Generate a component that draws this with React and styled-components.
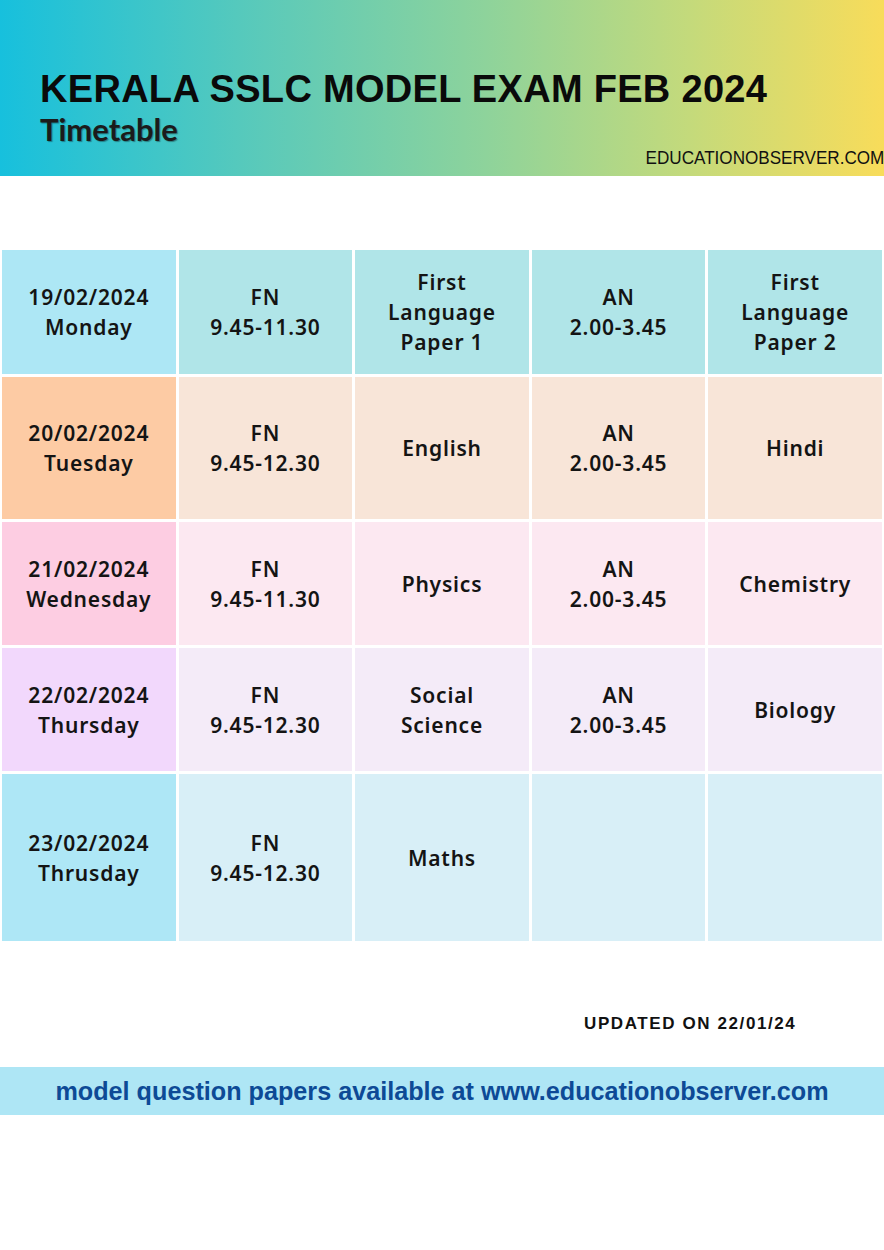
import React from "react";
import styled, { createGlobalStyle } from "styled-components";

const Global = createGlobalStyle`
  html, body { margin: 0; padding: 0; background: #ffffff; }
  body { font-family: "Noto Sans", "Liberation Sans", sans-serif; }
`;

const Page = styled.div`
  width: 884px;
  min-height: 1250px;
  background: #fff;
  display: flex;
  flex-direction: column;
`;

const Header = styled.header`
  height: 176px;
  box-sizing: border-box;
  background: linear-gradient(90deg, #17c0dd 0%, #5ccab9 30%, #8ed39b 55%, #c4da7b 78%, #f8dc5a 100%);
  padding: 68px 0 0 40px;
  display: flex;
  flex-direction: column;
`;

const Title = styled.h1`
  margin: 0;
  font-family: "Liberation Sans", Arial, sans-serif;
  font-weight: 700;
  font-size: 38px;
  line-height: 42px;
  letter-spacing: 0.3px;
  color: #0a0a0a;
`;

const Subtitle = styled.div`
  margin-top: 3px;
  font-family: "Lato", sans-serif;
  font-weight: 700;
  font-size: 31px;
  line-height: 33px;
  color: #1b1b1b;
  text-shadow: 1px 1px 1px rgba(0, 0, 0, 0.35);
`;

const Site = styled.div`
  align-self: flex-end;
  margin-top: 1px;
  font-family: "Liberation Sans", sans-serif;
  font-size: 18px;
  line-height: 22px;
  color: #111;
  transform: scaleX(0.95);
  transform-origin: right center;
`;

const Table = styled.div`
  margin: 74px 0 0 2px;
  width: 880px;
  display: grid;
  grid-template-columns: repeat(5, 1fr);
  column-gap: 3px;
  row-gap: 3px;
`;

const Cell = styled.div`
  background: ${(p) => p.$bg};
  height: ${(p) => p.$h}px;
  display: flex;
  align-items: center;
  justify-content: center;
  text-align: center;
  font-family: "Noto Sans", sans-serif;
  font-weight: 600;
  font-size: 21px;
  line-height: 30px;
  letter-spacing: 0.8px;
  color: #141414;
  white-space: pre-line;
  box-sizing: border-box;
`;

const Updated = styled.div`
  margin: 73px 0 0 584px;
  font-family: "Liberation Sans", sans-serif;
  font-weight: 700;
  font-size: 17px;
  line-height: 20px;
  letter-spacing: 1.6px;
  color: #111;
`;

const Banner = styled.div`
  margin-top: 33px;
  height: 48px;
  background: #aee6f5;
  display: flex;
  align-items: center;
  justify-content: center;
  font-family: "Liberation Sans", Arial, sans-serif;
  font-weight: 700;
  font-size: 25.2px;
  color: #0d4a96;
`;

const rows = [
  {
    h: 124,
    first: "#ade7f5",
    rest: "#b0e5e8",
    cells: ["19/02/2024\nMonday", "FN\n9.45-11.30", "First\nLanguage\nPaper 1", "AN\n2.00-3.45", "First\nLanguage\nPaper 2"],
  },
  {
    h: 142,
    first: "#fdcba4",
    rest: "#f8e5d8",
    cells: ["20/02/2024\nTuesday", "FN\n9.45-12.30", "English", "AN\n2.00-3.45", "Hindi"],
  },
  {
    h: 123,
    first: "#fdcde2",
    rest: "#fce8f1",
    cells: ["21/02/2024\nWednesday", "FN\n9.45-11.30", "Physics", "AN\n2.00-3.45", "Chemistry"],
  },
  {
    h: 123,
    first: "#f2d8fc",
    rest: "#f4ebf8",
    cells: ["22/02/2024\nThursday", "FN\n9.45-12.30", "Social\nScience", "AN\n2.00-3.45", "Biology"],
  },
  {
    h: 167,
    first: "#aee7f6",
    rest: "#d8eff7",
    cells: ["23/02/2024\nThrusday", "FN\n9.45-12.30", "Maths", "", ""],
  },
];

export default function App() {
  return (
    <Page>
      <Global />
      <Header>
        <Title>KERALA SSLC MODEL EXAM FEB 2024</Title>
        <Subtitle>Timetable</Subtitle>
        <Site>EDUCATIONOBSERVER.COM</Site>
      </Header>
      <Table>
        {rows.map((r, ri) =>
          r.cells.map((c, ci) => (
            <Cell key={ri + "-" + ci} $h={r.h} $bg={ci === 0 ? r.first : r.rest}>
              {c}
            </Cell>
          ))
        )}
      </Table>
      <Updated>UPDATED ON 22/01/24</Updated>
      <Banner>model question papers available at www.educationobserver.com</Banner>
    </Page>
  );
}
